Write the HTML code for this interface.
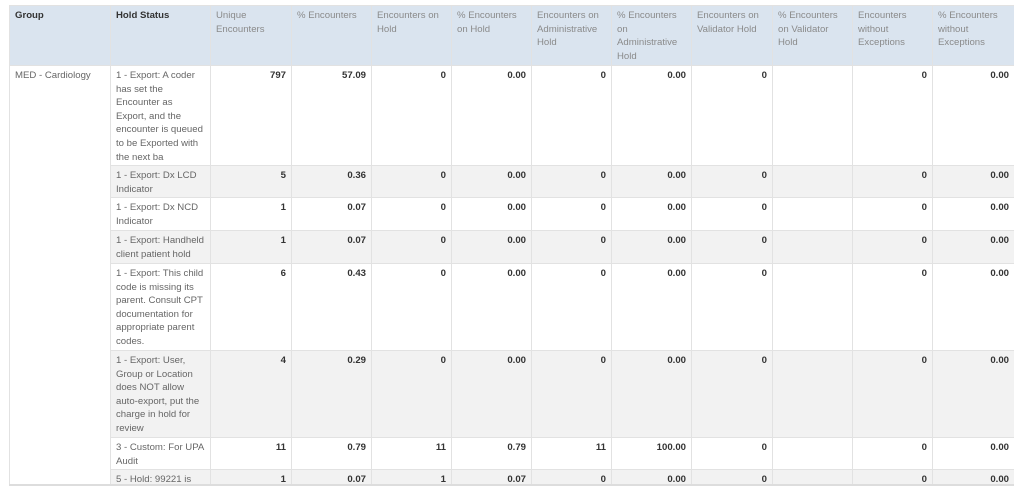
<!DOCTYPE html>
<html><head><style>
body{margin:0;background:#fff;font-family:"Liberation Sans",Arial,sans-serif;}
.wrap{position:absolute;left:9px;top:5px;width:1005px;height:479px;overflow:hidden;border-bottom:2px solid #ddd;}
table{border-collapse:collapse;table-layout:fixed;width:1005px;font-size:9.6px;line-height:13.6px;}
td,th{border:1px solid #e2e2e2;padding:3px 5px 0 5px;vertical-align:top;overflow:hidden;white-space:nowrap;}
th{background:#dae4ef;height:56px;text-align:left;font-weight:normal;color:#8a8a8a;}
th.b{font-weight:bold;color:#333;}
td{color:#666;}
td.n{text-align:right;font-weight:bold;color:#333;}
tr.g td.s, tr.g td.n, tr.g td.e{background:#f2f2f2;}
</style></head><body>
<div class="wrap"><table>
<colgroup><col style="width:101px"><col style="width:100px"><col style="width:81px"><col style="width:80px"><col style="width:80px"><col style="width:80px"><col style="width:80px"><col style="width:80px"><col style="width:81px"><col style="width:80px"><col style="width:80px"><col style="width:82px"></colgroup>
<tr><th class="b">Group</th><th class="b">Hold Status</th><th>Unique<br>Encounters</th><th>% Encounters</th><th>Encounters on<br>Hold</th><th>% Encounters<br>on Hold</th><th>Encounters on<br>Administrative<br>Hold</th><th>% Encounters<br>on<br>Administrative<br>Hold</th><th>Encounters on<br>Validator Hold</th><th>% Encounters<br>on Validator<br>Hold</th><th>Encounters<br>without<br>Exceptions</th><th>% Encounters<br>without<br>Exceptions</th></tr>
<tr style="height:100px"><td rowspan="8">MED - Cardiology</td><td class="s">1 - Export: A coder<br>has set the<br>Encounter as<br>Export, and the<br>encounter is queued<br>to be Exported with<br>the next ba</td><td class="n">797</td><td class="n">57.09</td><td class="n">0</td><td class="n">0.00</td><td class="n">0</td><td class="n">0.00</td><td class="n">0</td><td class="e"></td><td class="n">0</td><td class="n">0.00</td></tr>
<tr class="g" style="height:32px"><td class="s">1 - Export: Dx LCD<br>Indicator</td><td class="n">5</td><td class="n">0.36</td><td class="n">0</td><td class="n">0.00</td><td class="n">0</td><td class="n">0.00</td><td class="n">0</td><td class="e"></td><td class="n">0</td><td class="n">0.00</td></tr>
<tr style="height:33px"><td class="s">1 - Export: Dx NCD<br>Indicator</td><td class="n">1</td><td class="n">0.07</td><td class="n">0</td><td class="n">0.00</td><td class="n">0</td><td class="n">0.00</td><td class="n">0</td><td class="e"></td><td class="n">0</td><td class="n">0.00</td></tr>
<tr class="g" style="height:33px"><td class="s">1 - Export: Handheld<br>client patient hold</td><td class="n">1</td><td class="n">0.07</td><td class="n">0</td><td class="n">0.00</td><td class="n">0</td><td class="n">0.00</td><td class="n">0</td><td class="e"></td><td class="n">0</td><td class="n">0.00</td></tr>
<tr style="height:87px"><td class="s">1 - Export: This child<br>code is missing its<br>parent. Consult CPT<br>documentation for<br>appropriate parent<br>codes.</td><td class="n">6</td><td class="n">0.43</td><td class="n">0</td><td class="n">0.00</td><td class="n">0</td><td class="n">0.00</td><td class="n">0</td><td class="e"></td><td class="n">0</td><td class="n">0.00</td></tr>
<tr class="g" style="height:87px"><td class="s">1 - Export: User,<br>Group or Location<br>does NOT allow<br>auto-export, put the<br>charge in hold for<br>review</td><td class="n">4</td><td class="n">0.29</td><td class="n">0</td><td class="n">0.00</td><td class="n">0</td><td class="n">0.00</td><td class="n">0</td><td class="e"></td><td class="n">0</td><td class="n">0.00</td></tr>
<tr style="height:32px"><td class="s">3 - Custom: For UPA<br>Audit</td><td class="n">11</td><td class="n">0.79</td><td class="n">11</td><td class="n">0.79</td><td class="n">11</td><td class="n">100.00</td><td class="n">0</td><td class="e"></td><td class="n">0</td><td class="n">0.00</td></tr>
<tr class="g" style="height:32px"><td class="s">5 - Hold: 99221 is</td><td class="n">1</td><td class="n">0.07</td><td class="n">1</td><td class="n">0.07</td><td class="n">0</td><td class="n">0.00</td><td class="n">0</td><td class="e"></td><td class="n">0</td><td class="n">0.00</td></tr>
</table></div>
</body></html>
